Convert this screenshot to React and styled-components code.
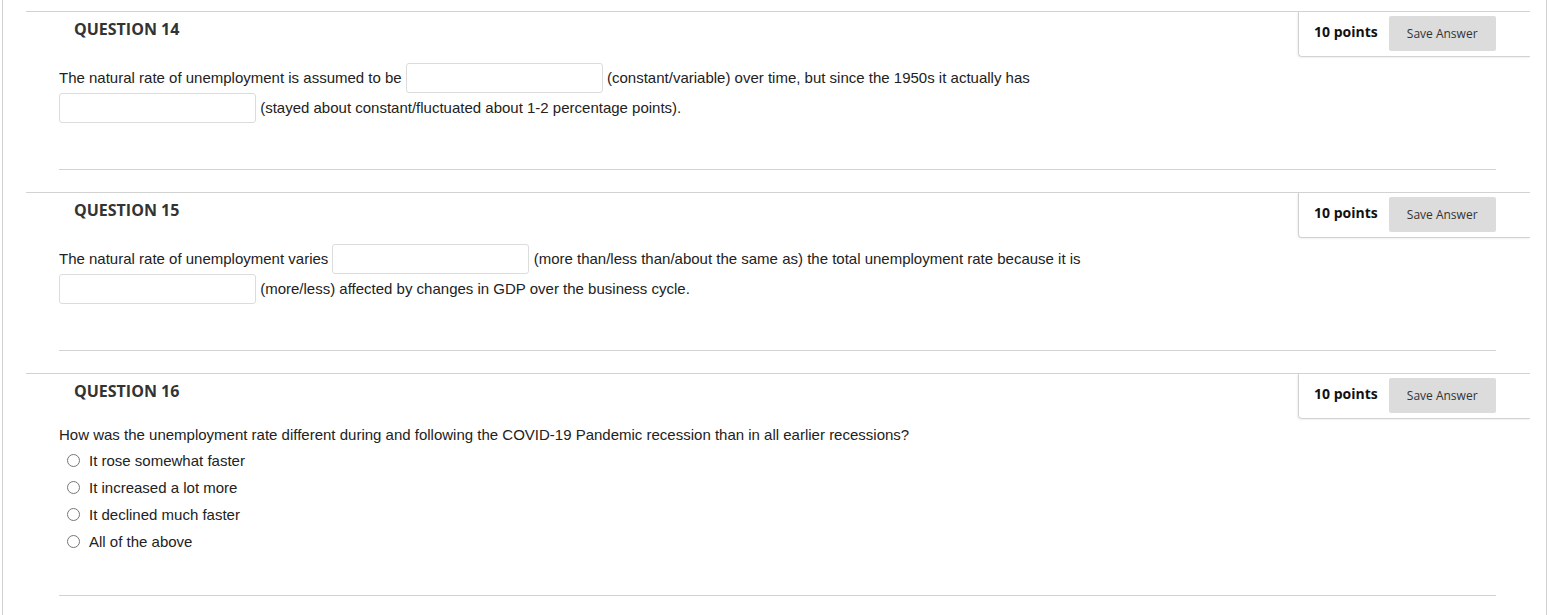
import React from 'react';
import styled, { createGlobalStyle } from 'styled-components';

const GlobalStyle = createGlobalStyle`
  html, body {
    margin: 0;
    padding: 0;
    background: #fff;
  }
  body {
    font-family: Arial, "Liberation Sans", sans-serif;
  }
`;

const Frame = styled.div`
  margin-left: 2px;
  width: 1545px;
  height: 615px;
  border-left: 1px solid #d2d2d2;
  border-right: 1px solid #d2d2d2;
  padding-top: 11px;
  box-sizing: border-box;
  overflow: hidden;
  display: flex;
  flex-direction: column;
  gap: 22px;
`;

const Block = styled.section`
  margin-left: 23px;
  width: 1504px;
  border-top: 1px solid #d2d2d2;
`;

const Header = styled.div`
  display: flex;
  justify-content: space-between;
  align-items: flex-start;
`;

const Title = styled.h3`
  margin: 6px 0 0 48px;
  font-family: "Open Sans", sans-serif;
  font-weight: 700;
  font-size: 16px;
  line-height: 22px;
  color: #333;
`;

const PointsBox = styled.div`
  width: 232px;
  height: 45px;
  box-sizing: border-box;
  display: flex;
  align-items: flex-start;
  gap: 11px;
  padding: 4px 34px 0 15px;
  border-left: 1px solid #d2d2d2;
  border-bottom: 1px solid #d2d2d2;
  border-bottom-left-radius: 4px;
  box-shadow: -1px 1px 2px rgba(0, 0, 0, 0.06);
`;

const Points = styled.span`
  font-family: "Open Sans", sans-serif;
  font-weight: 700;
  font-size: 14px;
  line-height: 32px;
  color: #111;
  white-space: nowrap;
`;

const SaveButton = styled.button`
  width: 107px;
  height: 35px;
  border: none;
  border-radius: 2px;
  background: #dcdcdc;
  color: #333;
  font-family: "Open Sans", sans-serif;
  font-size: 12px;
  cursor: pointer;
  padding: 0;
`;

const Body = styled.div`
  margin-top: 6px;
  padding: 0 34px 0 33px;
`;

const Prompt = styled.div`
  font-size: 15px;
  line-height: ${(p) => (p.$compact ? '19px' : '30px')};
  color: #222;
`;

const Blank = styled.input`
  width: 197px;
  height: 30px;
  box-sizing: border-box;
  border: 1px solid #dcdcdc;
  border-radius: 3px;
  vertical-align: top;
  margin: 0;
  padding: 0 6px;
  font-size: 14px;
  outline: none;
`;

const Options = styled.ul`
  list-style: none;
  margin: 3px 0 0 0;
  padding: 0 0 0 8px;
`;

const Option = styled.li`
  display: flex;
  align-items: center;
  height: 27px;
  gap: 9px;
  font-size: 15px;
  color: #222;
  cursor: pointer;
`;

const Radio = styled.span`
  width: 13px;
  height: 13px;
  box-sizing: border-box;
  border: 1px solid #767676;
  border-radius: 50%;
  background: #fff;
  flex-shrink: 0;
`;

const Separator = styled.hr`
  margin: ${(p) => p.$space}px 0 0 0;
  border: none;
  border-top: 1px solid #d2d2d2;
  height: 0;
`;

const Question = ({ number, children, space = 46 }) => (
  <Block>
    <Header>
      <Title>QUESTION {number}</Title>
      <PointsBox>
        <Points>10 points</Points>
        <SaveButton>Save Answer</SaveButton>
      </PointsBox>
    </Header>
    <Body>
      {children}
      <Separator $space={space} />
    </Body>
  </Block>
);

const choices = [
  'It rose somewhat faster',
  'It increased a lot more',
  'It declined much faster',
  'All of the above',
];

export default function App() {
  return (
    <>
      <GlobalStyle />
      <Frame>
        <Question number={14}>
          <Prompt>
            The natural rate of unemployment is assumed to be <Blank /> (constant/variable) over time, but since the 1950s it actually has
            <br />
            <Blank /> (stayed about constant/fluctuated about 1-2 percentage points).
          </Prompt>
        </Question>
        <Question number={15}>
          <Prompt>
            The natural rate of unemployment varies <Blank /> (more than/less than/about the same as) the total unemployment rate because it is
            <br />
            <Blank /> (more/less) affected by changes in GDP over the business cycle.
          </Prompt>
        </Question>
        <Question number={16} space={40}>
          <Prompt $compact>
            How was the unemployment rate different during and following the COVID-19 Pandemic recession than in all earlier recessions?
          </Prompt>
          <Options>
            {choices.map((c) => (
              <Option key={c}>
                <Radio />
                {c}
              </Option>
            ))}
          </Options>
        </Question>
      </Frame>
    </>
  );
}
